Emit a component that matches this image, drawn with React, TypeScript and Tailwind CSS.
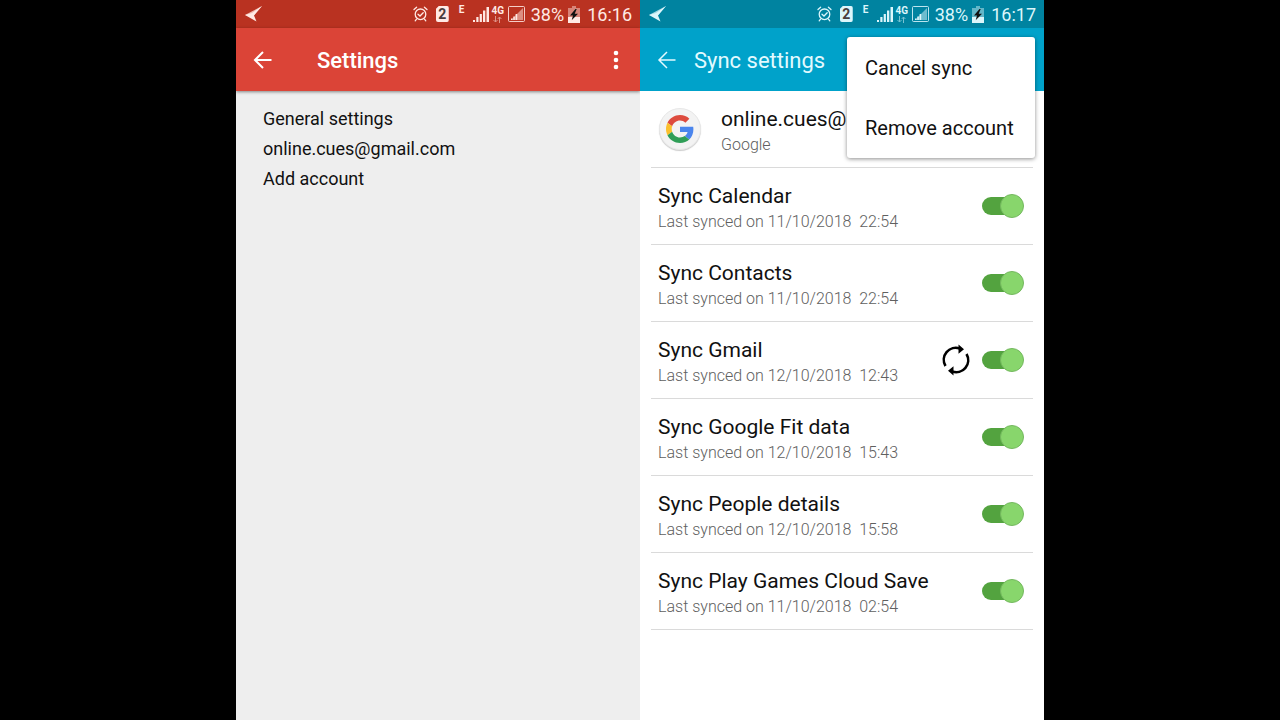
import React, { useState } from 'react';

const services = [
  { name: 'Sync Calendar', date: '11/10/2018', time: '22:54' },
  { name: 'Sync Contacts', date: '11/10/2018', time: '22:54' },
  { name: 'Sync Gmail', date: '12/10/2018', time: '12:43', syncing: true },
  { name: 'Sync Google Fit data', date: '12/10/2018', time: '15:43' },
  { name: 'Sync People details', date: '12/10/2018', time: '15:58' },
  { name: 'Sync Play Games Cloud Save', date: '11/10/2018', time: '02:54' },
];

export default function App() {
  return (
    <div className="min-h-screen bg-black flex justify-center font-['Roboto',sans-serif]">
      <SettingsScreen />
      <SyncScreen />
    </div>
  );
}

function SettingsScreen() {
  return (
    <section className="flex-1 max-w-[404px] bg-[#eeeeee]">
      <div className="bg-[#b93221] text-[#ffe9e4]">
        <StatusBar time="16:16" />
      </div>
      <header className="h-[63px] bg-[#db4437] text-white flex items-center px-4 shadow-[0_1px_3px_rgba(0,0,0,0.45)]">
        <button aria-label="Back" className="w-[22px] h-[22px] flex items-center justify-center">
          <BackIcon strokeWidth={2} />
        </button>
        <h1 className="ml-[43px] flex-1 pt-[3px] text-[22px] leading-7 font-medium">Settings</h1>
        <button aria-label="More options" className="w-4 h-6 flex items-center justify-center">
          <svg width="6" height="20" viewBox="0 0 6 20" fill="currentColor">
            <circle cx="3" cy="3" r="2.3" />
            <circle cx="3" cy="10" r="2.3" />
            <circle cx="3" cy="17" r="2.3" />
          </svg>
        </button>
      </header>
      <nav className="px-[27px] pt-[13px] flex flex-col items-start text-lg leading-[30px] text-[#111111]">
        <a href="#general">General settings</a>
        <a href="#account">online.cues@gmail.com</a>
        <a href="#add">Add account</a>
      </nav>
    </section>
  );
}

function SyncScreen() {
  return (
    <section className="relative flex-1 max-w-[404px] bg-white">
      <div className="bg-[#0083a0] text-[#dcf6fb]">
        <StatusBar time="16:17" />
      </div>
      <header className="h-[63px] bg-[#00a2ca] text-[#e2faff] flex items-center px-4">
        <button aria-label="Back" className="w-[22px] h-[22px] flex items-center justify-center">
          <BackIcon strokeWidth={1.5} />
        </button>
        <h1 className="ml-4 pt-[3px] text-[22px] leading-7">Sync settings</h1>
      </header>

      <main className="px-[11px]">
        {/* Account */}
        <div className="h-[77px] border-b border-[#dadada] flex items-center px-2">
          <GoogleLogo />
          <div className="ml-5 pt-[5px]">
            <p className="text-[21px] leading-[27px] text-[#111111]">online.cues@</p>
            <p className="text-base leading-6 font-light text-[#606060]">Google</p>
          </div>
        </div>

        {services.map((service) => (
          <SyncRow key={service.name} {...service} />
        ))}
      </main>

      {/* Overflow menu */}
      <div
        role="menu"
        className="absolute top-[37px] right-[9px] w-[188px] pb-px rounded-[3px] bg-white text-xl text-[#111111] shadow-[0_1px_4px_rgba(0,0,0,0.45)]"
      >
        <button role="menuitem" className="block w-full h-[60px] px-[18px] pt-0.5 text-left">Cancel sync</button>
        <button role="menuitem" className="block w-full h-[60px] px-[18px] pt-0.5 text-left">Remove account</button>
      </div>
    </section>
  );
}

function SyncRow({ name, date, time, syncing }: { name: string; date: string; time: string; syncing?: boolean }) {
  const [enabled, setEnabled] = useState(true);

  return (
    <label className="h-[77px] border-b border-[#dadada] flex items-center pl-[7px] pr-[9px]">
      <span className="flex-1 pt-[5px]">
        <span className="block text-[21px] leading-[27px] text-[#111111]">{name}</span>
        <span className="block text-base leading-6 font-light text-[#606060] whitespace-pre">
          {`Last synced on ${date}  ${time}`}
        </span>
      </span>
      {syncing && <SyncIcon />}
      <input
        type="checkbox"
        checked={enabled}
        onChange={() => setEnabled(!enabled)}
        className="relative appearance-none w-[42px] h-6 before:absolute before:left-0 before:top-[3px] before:w-9 before:h-[18px] before:rounded-full before:bg-[#bdbdbd] checked:before:bg-[#53a33f] after:absolute after:left-0 checked:after:left-[18px] after:top-0 after:w-6 after:h-6 after:rounded-full after:bg-[#f1f1f1] checked:after:bg-[#88d66c] after:border after:border-[#74b85f]"
      />
    </label>
  );
}

function StatusBar({ time }: { time: string }) {
  return (
    <div className="h-7 flex items-center pl-2 pr-2 text-lg leading-7">
      <svg width="19" height="18" viewBox="0 0 19 18" fill="currentColor">
        <path d="M18 1 1 10l8 1.2z" opacity=".75" />
        <path d="M1 10l11.5 6.5-2.5-6L18 1 8 8z" />
      </svg>
      <div className="ml-auto flex items-center">
        <svg width="15" height="16" viewBox="0 0 15 16" fill="none" stroke="currentColor" strokeWidth="1.3" strokeLinecap="round">
          <circle cx="7.5" cy="8.3" r="5.3" />
          <path d="M1 3.6 3.6 1.3M14 3.6l-2.6-2.3M3.5 13.2l-1.3 1.6M11.5 13.2l1.3 1.6M5 8.2l2 1.8 3.2-3.3" />
        </svg>
        <span className="ml-2 w-[13px] h-4 rounded-[2px] bg-current flex items-center justify-center [clip-path:polygon(3px_0,100%_0,100%_100%,0_100%,0_3px)]">
          <span className="text-sm leading-4 font-bold text-[#4a3d3d]">2</span>
        </span>
        <span className="ml-[10px] w-[6px] pb-2 text-[10px] leading-3 font-bold">E</span>
        <svg className="ml-2" width="16" height="16" viewBox="0 0 16 16" fill="currentColor">
          <path d="M0 14h2v2H0zM3.3 11h2.2v5H3.3zM6.7 8h2.2v8H6.7zM10 4.5h2.3V16H10zM13.5 1H16v15h-2.5z" />
        </svg>
        <span className="ml-[3px] w-3 flex flex-col items-center text-[10px] leading-[10px] font-bold">
          4G
          <svg width="9" height="7" viewBox="0 0 9 7" fill="none" stroke="currentColor" opacity=".55">
            <path d="M2.5 0v6M.5 4l2 2 2-2M6.5 7V1M4.7 3l1.8-2 1.9 2" />
          </svg>
        </span>
        <svg className="ml-1" width="17" height="16" viewBox="0 0 17 16" fill="currentColor">
          <rect x=".5" y=".5" width="16" height="15" rx="1" fill="none" stroke="currentColor" opacity=".85" />
          <path d="M15 2v12H3z" opacity=".5" />
          <path d="M3 12.5h1.5V14H3zM5.3 10.5h1.5V14H5.3zM7.6 8h1.6v6H7.6z" />
        </svg>
        <span className="ml-[6px] pt-px">38%</span>
        <svg className="ml-1" width="12" height="17" viewBox="0 0 12 17">
          <path d="M4 0h4v2h4v9H0V2h4z" fill="currentColor" opacity=".45" />
          <path d="M0 11h12v6H0z" fill="currentColor" />
          <path d="M7.5 3 2 9.5h3L3.7 14.2 10 7.8H6.7L8.7 3z" fill="#111111" />
        </svg>
        <span className="ml-[7px] pt-px">{time}</span>
      </div>
    </div>
  );
}

function BackIcon({ strokeWidth }: { strokeWidth: number }) {
  return (
    <svg width="20" height="18" viewBox="0 0 20 18" fill="none" stroke="currentColor" strokeWidth={strokeWidth}>
      <path d="M18.5 9H2M10 1 2 9l8 8" />
    </svg>
  );
}

function SyncIcon() {
  return (
    <svg className="mr-[11px]" width="30" height="32" viewBox="0 0 30 32" fill="none" stroke="#000000" strokeWidth="2.6">
      <path d="M4.5 22A12 12 0 0 1 19 4.6" />
      <path d="M25.5 10A12 12 0 0 1 11 27.4" />
      <path d="M17.5.5 23 5.2l-5.5 4.6zM12.5 31.5 7 26.8l5.5-4.6z" fill="#000000" stroke="none" />
    </svg>
  );
}

function GoogleLogo() {
  return (
    <span className="w-[42px] h-[42px] rounded-full bg-[#f3f3f3] border border-[#e8e8e8] shadow-[0_1px_1px_rgba(0,0,0,0.2)] flex items-center justify-center">
      <svg width="28" height="28" viewBox="0 0 48 48">
        <path fill="#dd4b3e" d="M24 9.5c3.54 0 6.71 1.22 9.21 3.6l6.85-6.85C35.9 2.38 30.47 0 24 0 14.62 0 6.51 5.38 2.56 13.22l7.98 6.19C12.43 13.72 17.74 9.5 24 9.5z" />
        <path fill="#4a85ed" d="M46.98 24.55c0-1.57-.15-3.09-.38-4.55H24v9.02h12.94c-.58 2.96-2.26 5.48-4.78 7.18l7.73 6c4.51-4.18 7.09-10.36 7.09-17.65z" />
        <path fill="#fbc02d" d="M10.53 28.59c-.48-1.45-.76-2.99-.76-4.59s.27-3.14.76-4.59l-7.98-6.19C.92 16.46 0 20.12 0 24c0 3.88.92 7.54 2.56 10.78l7.97-6.19z" />
        <path fill="#2f9e57" d="M24 48c6.48 0 11.93-2.13 15.89-5.81l-7.73-6c-2.15 1.45-4.92 2.3-8.16 2.3-6.26 0-11.57-4.22-13.47-9.91l-7.98 6.19C6.51 42.62 14.62 48 24 48z" />
      </svg>
    </span>
  );
}
